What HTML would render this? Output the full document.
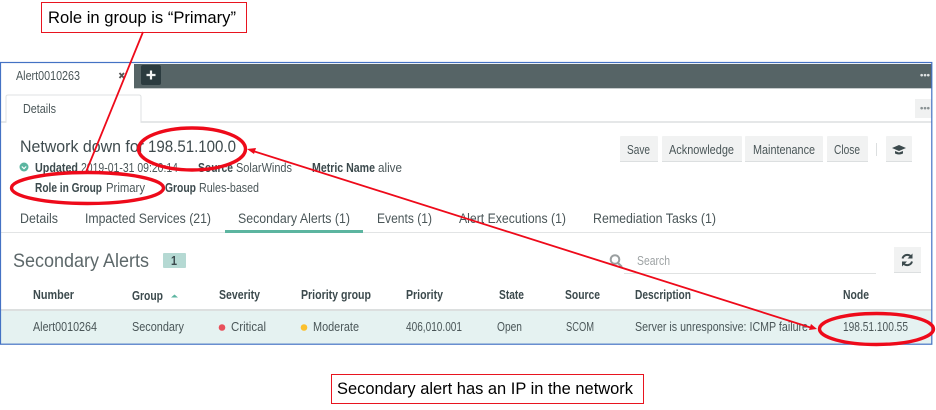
<!DOCTYPE html>
<html lang="en"><head><meta charset="utf-8"><title>Secondary Alerts</title>
<style>
html,body{margin:0;padding:0;background:#fff;width:936px;height:410px;overflow:hidden}
svg{display:block;font-size:12.5px}
text{font-family:"Liberation Sans",sans-serif;fill:#4a5658}
.b{font-weight:bold;fill:#3c4a4d}
.c{fill:#000}
</style></head><body>
<svg width="936" height="410" viewBox="0 0 936 410" xmlns="http://www.w3.org/2000/svg">
<rect width="936" height="410" fill="#fff"/>
<!-- tab bar -->
<rect x="134" y="64" width="798" height="24" fill="#566466"/>
<rect x="134" y="88" width="798" height="1" fill="#c6cbcc"/>
<rect x="141" y="65" width="20" height="20" rx="2" fill="#2b3b3f"/>
<path d="M151 70.500v9M146.500 75h9" stroke="#f2f4f4" stroke-width="2.200"/>
<text x="16" y="80" textLength="64" lengthAdjust="spacingAndGlyphs">Alert0010263</text>
<path d="M119.500 73l4.500 5M124 73l-4.500 5" stroke="#555" stroke-width="1.800"/>
<text x="920" y="78" textLength="10" lengthAdjust="spacingAndGlyphs" style="fill:#dfe3e3;font-weight:bold;font-size:9px">•••</text>
<!-- details tab -->
<rect x="0" y="121" width="932" height="2" fill="#e5e7e8"/>
<path d="M6 122V97q0-2 2-2H139q2 0 2 2V122" fill="#fff" stroke="#dfe2e3" stroke-width="1"/>
<rect x="6.500" y="120" width="134" height="4" fill="#fff"/>
<text x="23" y="113" textLength="33" lengthAdjust="spacingAndGlyphs">Details</text>
<rect x="915" y="99" width="17" height="19" fill="#f0f1f1"/>
<text x="920" y="111" textLength="10" lengthAdjust="spacingAndGlyphs" style="fill:#8a9294;font-weight:bold;font-size:9px">•••</text>
<!-- heading -->
<text x="20" y="152" textLength="124" lengthAdjust="spacingAndGlyphs" style="font-size:16.500px;fill:#3f4b4e">Network down for</text>
<text x="148" y="152" textLength="88" lengthAdjust="spacingAndGlyphs" style="font-size:16.500px;fill:#3f4b4e">198.51.100.0</text>
<circle cx="24" cy="167" r="4.500" fill="#5bb5a0"/>
<path d="M21.800 166.500l2.200 2.200 2.200-2.200" stroke="#fff" stroke-width="1.200" fill="none"/>
<text x="35" y="172" class="b" textLength="43" lengthAdjust="spacingAndGlyphs">Updated</text>
<text x="81" y="172" textLength="97" lengthAdjust="spacingAndGlyphs">2019-01-31 09:20:14</text>
<text x="198" y="172" class="b" textLength="35" lengthAdjust="spacingAndGlyphs">Source</text>
<text x="236" y="172" textLength="56" lengthAdjust="spacingAndGlyphs">SolarWinds</text>
<text x="312" y="172" class="b" textLength="63" lengthAdjust="spacingAndGlyphs">Metric Name</text>
<text x="378" y="172" textLength="24" lengthAdjust="spacingAndGlyphs">alive</text>
<text x="35" y="192" class="b" textLength="67" lengthAdjust="spacingAndGlyphs">Role in Group</text>
<text x="106" y="192" textLength="39" lengthAdjust="spacingAndGlyphs">Primary</text>
<text x="165" y="192" class="b" textLength="31" lengthAdjust="spacingAndGlyphs">Group</text>
<text x="199" y="192" textLength="60" lengthAdjust="spacingAndGlyphs">Rules-based</text>
<!-- buttons -->
<g fill="#f1f2f2">
<rect x="620" y="136" width="38" height="26" rx="1"/>
<rect x="662" y="136" width="80" height="26" rx="1"/>
<rect x="745" y="136" width="78" height="26" rx="1"/>
<rect x="827" y="136" width="41" height="26" rx="1"/>
<rect x="886" y="136" width="26" height="26" rx="1"/>
</g>
<g fill="#dcdfe0">
<rect x="620" y="161" width="38" height="1"/><rect x="662" y="161" width="80" height="1"/><rect x="745" y="161" width="78" height="1"/><rect x="827" y="161" width="41" height="1"/><rect x="886" y="161" width="26" height="1"/>
<rect x="876" y="143" width="1" height="13"/>
</g>
<text x="627" y="154" textLength="23" lengthAdjust="spacingAndGlyphs">Save</text>
<text x="669" y="154" textLength="65" lengthAdjust="spacingAndGlyphs">Acknowledge</text>
<text x="753" y="154" textLength="62" lengthAdjust="spacingAndGlyphs">Maintenance</text>
<text x="834" y="154" textLength="26" lengthAdjust="spacingAndGlyphs">Close</text>
<path d="M892 148l7-3 7 3-7 3zM895 151v2.500q4 2 8 0V151l-4 1.500z" fill="#3c4a4d"/>
<!-- sub tabs -->
<rect x="0" y="232" width="932" height="1" fill="#e2e4e5"/>
<rect x="225" y="230" width="138" height="3" fill="#5cb5a0"/>
<g style="font-size:13.500px">
<text x="20" y="223" textLength="38" lengthAdjust="spacingAndGlyphs">Details</text>
<text x="85" y="223" textLength="126" lengthAdjust="spacingAndGlyphs">Impacted Services (21)</text>
<text x="238" y="223" textLength="112" lengthAdjust="spacingAndGlyphs">Secondary Alerts (1)</text>
<text x="377" y="223" textLength="55" lengthAdjust="spacingAndGlyphs">Events (1)</text>
<text x="459" y="223" textLength="107" lengthAdjust="spacingAndGlyphs">Alert Executions (1)</text>
<text x="593" y="223" textLength="123" lengthAdjust="spacingAndGlyphs">Remediation Tasks (1)</text>
</g>
<!-- list header -->
<text x="13" y="267" textLength="136" lengthAdjust="spacingAndGlyphs" style="font-size:19.500px;fill:#5d686a">Secondary Alerts</text>
<rect x="163" y="253" width="23" height="15" rx="1" fill="#b5d9d3"/>
<text x="171" y="265" class="b" textLength="6" lengthAdjust="spacingAndGlyphs">1</text>
<circle cx="615" cy="259.500" r="4.300" fill="none" stroke="#9a9fa0" stroke-width="2"/>
<path d="M618 263l4 4" stroke="#9a9fa0" stroke-width="2.200"/>
<text x="637" y="265" textLength="33" lengthAdjust="spacingAndGlyphs" style="fill:#9ea3a4">Search</text>
<rect x="624" y="273" width="252" height="1" fill="#e0e2e2"/>
<rect x="894" y="247" width="27" height="26" fill="#f1f2f2"/>
<rect x="894" y="272" width="27" height="1" fill="#dcdfe0"/>
<path d="M902.500 258.500a5 5 0 0 1 8.500-2M912 261.500a5 5 0 0 1-8.500 2" fill="none" stroke="#3c4a4d" stroke-width="2"/>
<path d="M912.500 253.500v5h-5zM902 266.500v-5h5z" fill="#3c4a4d"/>
<!-- table head -->
<text x="33" y="299" class="b" textLength="41" lengthAdjust="spacingAndGlyphs">Number</text>
<text x="132" y="300" class="b" textLength="31" lengthAdjust="spacingAndGlyphs">Group</text>
<path d="M171 297.500l3.500-3 3.500 3z" fill="#5cb5a0"/>
<text x="219" y="299" class="b" textLength="41" lengthAdjust="spacingAndGlyphs">Severity</text>
<text x="301" y="299" class="b" textLength="70" lengthAdjust="spacingAndGlyphs">Priority group</text>
<text x="406" y="299" class="b" textLength="37" lengthAdjust="spacingAndGlyphs">Priority</text>
<text x="499" y="299" class="b" textLength="25" lengthAdjust="spacingAndGlyphs">State</text>
<text x="565" y="299" class="b" textLength="35" lengthAdjust="spacingAndGlyphs">Source</text>
<text x="635" y="299" class="b" textLength="56" lengthAdjust="spacingAndGlyphs">Description</text>
<text x="843" y="299" class="b" textLength="26" lengthAdjust="spacingAndGlyphs">Node</text>
<!-- row -->
<rect x="1" y="310" width="931" height="34" fill="#e5f2f1"/>
<rect x="1" y="309" width="931" height="2" fill="#dcdfdf"/>
<text x="33" y="331" textLength="64" lengthAdjust="spacingAndGlyphs">Alert0010264</text>
<text x="132" y="331" textLength="52" lengthAdjust="spacingAndGlyphs">Secondary</text>
<circle cx="222" cy="327.500" r="3.300" fill="#e8505b"/>
<text x="231" y="331" textLength="35" lengthAdjust="spacingAndGlyphs">Critical</text>
<circle cx="304" cy="327.500" r="3.300" fill="#fbc02d"/>
<text x="313" y="331" textLength="46" lengthAdjust="spacingAndGlyphs">Moderate</text>
<text x="406" y="331" textLength="56" lengthAdjust="spacingAndGlyphs">406,010.001</text>
<text x="497" y="331" textLength="25" lengthAdjust="spacingAndGlyphs">Open</text>
<text x="566" y="331" textLength="28" lengthAdjust="spacingAndGlyphs">SCOM</text>
<text x="635" y="331" textLength="173" lengthAdjust="spacingAndGlyphs">Server is unresponsive: ICMP failure</text>
<text x="843" y="331" textLength="65" lengthAdjust="spacingAndGlyphs">198.51.100.55</text>
<!-- frame -->
<rect x="0.500" y="62.500" width="931.300" height="281.700" fill="none" stroke="#4472c4" stroke-width="1.200"/>
<!-- callouts -->
<rect x="41.500" y="2.500" width="205" height="30" fill="#fff" stroke="#e8141f" stroke-width="1"/>
<text class="c" x="48" y="23" textLength="188" lengthAdjust="spacingAndGlyphs" style="font-size:16.500px">Role in group is “Primary”</text>
<rect x="331.500" y="374.500" width="312" height="29" fill="#fff" stroke="#e8141f" stroke-width="1"/>
<text class="c" x="337" y="394" textLength="296" lengthAdjust="spacingAndGlyphs" style="font-size:16.500px">Secondary alert has an IP in the network</text>
<!-- annotations -->
<g fill="none" stroke="#ee0a1a">
<path d="M143 32L86 172" stroke-width="1.800"/>
<ellipse cx="87.500" cy="188" rx="76" ry="15.500" stroke-width="3.400"/>
<ellipse cx="192" cy="149" rx="53.500" ry="21" stroke-width="3.400"/>
<ellipse cx="876.500" cy="329" rx="57" ry="15.500" stroke-width="3.400"/>
<path d="M250 150L812 328" stroke-width="1.800"/>
</g>
<path d="M247 149l9-1-2 6zM817 329l-8 1 2-6z" fill="#ee0a1a"/>
</svg>
</body></html>
